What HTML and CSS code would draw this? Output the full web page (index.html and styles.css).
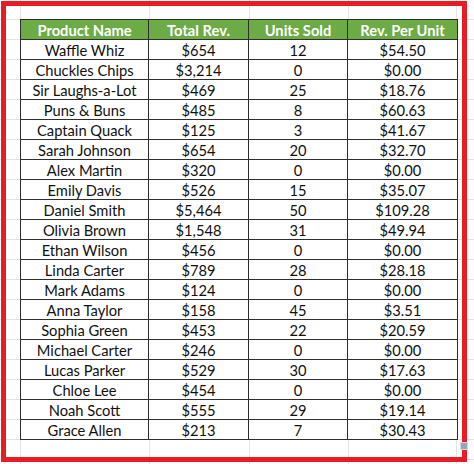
FILE: index.html
```html
<!DOCTYPE html>
<html>
<head>
<meta charset="utf-8">
<link rel="stylesheet" href="styles.css">
</head>
<body>
<div class="sheet">
  <div class="frame">
    <table class="data">
      <colgroup>
        <col class="c1"><col class="c2"><col class="c3"><col class="c4">
      </colgroup>
      <thead>
        <tr><th>Product Name</th><th>Total Rev.</th><th>Units Sold</th><th>Rev. Per Unit</th></tr>
      </thead>
      <tbody>
        <tr><td>Waffle Whiz</td><td>$654</td><td>12</td><td>$54.50</td></tr>
        <tr><td>Chuckles Chips</td><td>$3,214</td><td>0</td><td>$0.00</td></tr>
        <tr><td>Sir Laughs-a-Lot</td><td>$469</td><td>25</td><td>$18.76</td></tr>
        <tr><td>Puns &amp; Buns</td><td>$485</td><td>8</td><td>$60.63</td></tr>
        <tr><td>Captain Quack</td><td>$125</td><td>3</td><td>$41.67</td></tr>
        <tr><td>Sarah Johnson</td><td>$654</td><td>20</td><td>$32.70</td></tr>
        <tr><td>Alex Martin</td><td>$320</td><td>0</td><td>$0.00</td></tr>
        <tr><td>Emily Davis</td><td>$526</td><td>15</td><td>$35.07</td></tr>
        <tr><td>Daniel Smith</td><td>$5,464</td><td>50</td><td>$109.28</td></tr>
        <tr><td>Olivia Brown</td><td>$1,548</td><td>31</td><td>$49.94</td></tr>
        <tr><td>Ethan Wilson</td><td>$456</td><td>0</td><td>$0.00</td></tr>
        <tr><td>Linda Carter</td><td>$789</td><td>28</td><td>$28.18</td></tr>
        <tr><td>Mark Adams</td><td>$124</td><td>0</td><td>$0.00</td></tr>
        <tr><td>Anna Taylor</td><td>$158</td><td>45</td><td>$3.51</td></tr>
        <tr><td>Sophia Green</td><td>$453</td><td>22</td><td>$20.59</td></tr>
        <tr><td>Michael Carter</td><td>$246</td><td>0</td><td>$0.00</td></tr>
        <tr><td>Lucas Parker</td><td>$529</td><td>30</td><td>$17.63</td></tr>
        <tr><td>Chloe Lee</td><td>$454</td><td>0</td><td>$0.00</td></tr>
        <tr><td>Noah Scott</td><td>$555</td><td>29</td><td>$19.14</td></tr>
        <tr><td>Grace Allen</td><td>$213</td><td>7</td><td>$30.43</td></tr>
      </tbody>
    </table>
  </div>
  <div class="qa-icon"></div>
</div>
</body>
</html>
```

FILE: styles.css
```css
html, body {
  margin: 0;
  padding: 0;
}
body {
  width: 474px;
  height: 464px;
  overflow: hidden;
  background-color: #ffffff;
  font-family: Lato, "Liberation Sans", sans-serif;
}
.sheet {
  position: relative;
  width: 474px;
  height: 464px;
  background-image:
    repeating-linear-gradient(to bottom, transparent 0 19px, #e4e4e4 19px 20px),
    linear-gradient(to right,
      transparent 0 20px, #e4e4e4 20px 21px,
      transparent 21px 149px, #e4e4e4 149px 150px,
      transparent 150px 249px, #e4e4e4 249px 250px,
      transparent 250px 348px, #e4e4e4 348px 349px,
      transparent 349px 456px, #e4e4e4 456px 457px,
      transparent 457px);
  padding: 1px 0 0 1px;
  box-sizing: border-box;
}
.frame {
  width: 466px;
  height: 461px;
  box-sizing: border-box;
  border: 5px solid #e81c24;
  padding: 13px 0 0 14px;
}
.data {
  border-collapse: collapse;
  table-layout: fixed;
  width: 437px;
  background: #ffffff;
  color: #111111;
  font-size: 14.7px;
}
.c1 { width: 128px; }
.c2 { width: 100px; }
.c3 { width: 99px; }
.c4 { width: 110px; }
.data th, .data td {
  border: 1px solid #2e2e2e;
  height: 19px;
  padding: 0;
  text-align: center;
  line-height: 18px;
  white-space: nowrap;
}
.data th {
  background: #6cab46;
  color: #ffffff;
  font-weight: 700;
}
.qa-icon {
  position: absolute;
  left: 460px;
  top: 442px;
  width: 6px;
  height: 6px;
  background: #9aa6b8;
  border: 1px solid #d0d6e0;
}
```
